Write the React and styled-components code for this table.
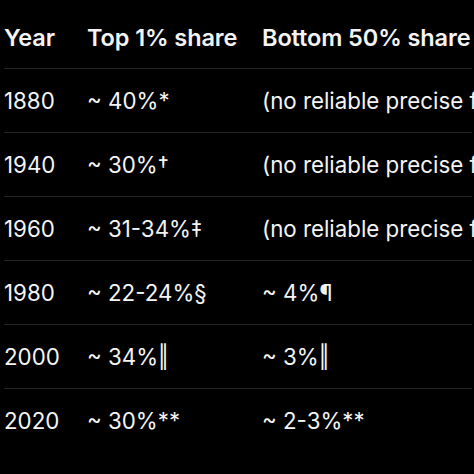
import React from "react";
import styled, { createGlobalStyle } from "styled-components";

const GlobalStyle = createGlobalStyle`
  html, body {
    margin: 0;
    padding: 0;
    background: #000;
    overflow: hidden;
  }
  body {
    font-family: Inter, "Noto Sans", "Liberation Sans", sans-serif;
    color: #f4f4f4;
  }
`;

const Page = styled.div`
  width: 474px;
  height: 474px;
  overflow: hidden;
  background: #000;
`;

const Table = styled.div`
  width: 468px;
  margin-left: 4px;
  padding-top: 6px;
`;

const Row = styled.div`
  display: grid;
  grid-template-columns: 83px 175px 1fr;
  align-items: center;
  height: ${(p) => (p.head ? "62px" : "63px")};
  border-bottom: ${(p) => (p.last ? "none" : "1px solid #262626")};
  white-space: nowrap;
`;

const Cell = styled.div`
  font-size: ${(p) => (p.head ? "23.5px" : "22.3px")};
  font-weight: ${(p) => (p.head ? 600 : 400)};
  letter-spacing: ${(p) => (p.head ? "-0.1px" : "0")};
  overflow: visible;
`;

const rows = [
  ["1880", "~ 40%*", "(no reliable precise figures)"],
  ["1940", "~ 30%†", "(no reliable precise figures)"],
  ["1960", "~ 31-34%‡", "(no reliable precise figures)"],
  ["1980", "~ 22-24%§", "~ 4%¶"],
  ["2000", "~ 34%‖", "~ 3%‖"],
  ["2020", "~ 30%**", "~ 2-3%**"],
];

export default function App() {
  return (
    <Page>
      <GlobalStyle />
      <Table>
        <Row head>
          <Cell head>Year</Cell>
          <Cell head>Top 1% share</Cell>
          <Cell head>Bottom 50% share</Cell>
        </Row>
        {rows.map((r, i) => (
          <Row key={r[0]} last={i === rows.length - 1}>
            <Cell>{r[0]}</Cell>
            <Cell>{r[1]}</Cell>
            <Cell>{r[2]}</Cell>
          </Row>
        ))}
      </Table>
    </Page>
  );
}
